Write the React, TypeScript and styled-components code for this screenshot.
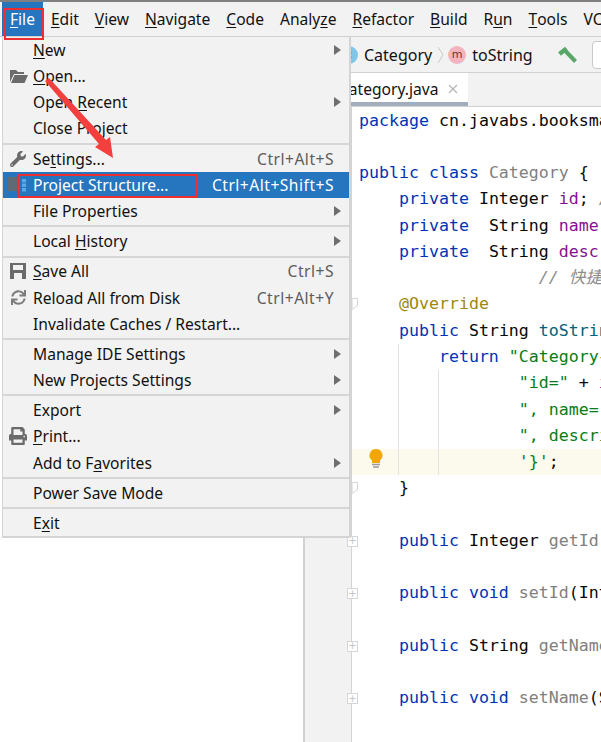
import React from "react";
import styled, { createGlobalStyle } from "styled-components";
import { FaWrench, FaPrint, FaSync } from "react-icons/fa";

const GlobalStyle = createGlobalStyle`
  html, body {
    margin: 0;
    padding: 0;
    background: #fff;
  }
  body {
    font-family: "Noto Sans", "Open Sans", sans-serif;
  }
`;

const Window = styled.div`
  position: relative;
  display: flex;
  flex-direction: column;
  width: 601px;
  height: 742px;
  overflow: hidden;
  background: #fff;
`;

const TopLine = styled.div`
  height: 2px;
  background: #7f7f7f;
  flex: none;
`;

const MenuBar = styled.div`
  display: flex;
  height: 34px;
  flex: none;
  padding-left: 2px;
  background: #f2f2f2;
  border-bottom: 1px solid #d1d1d1;
  font-size: 15.6px;
  white-space: nowrap;
`;

const BarItem = styled.div<{ $active?: boolean }>`
  display: flex;
  align-items: center;
  padding: 0 8px 1px;
  color: ${({ $active }) => ($active ? "#fff" : "#111")};
  background: ${({ $active }) => ($active ? "#2675bf" : "transparent")};
`;

const Body = styled.div`
  display: flex;
  flex: 1;
  min-height: 0;
`;

const Sidebar = styled.div`
  width: 303px;
  flex: none;
  background: #fff;
  border-right: 2px solid #d1d1d1;
`;

const Main = styled.div`
  display: flex;
  flex-direction: column;
  flex: 1;
  min-width: 0;
`;

const Breadcrumb = styled.div`
  display: flex;
  align-items: center;
  height: 35px;
  flex: none;
  padding-left: 35px;
  background: #f2f2f2;
  border-bottom: 1px solid #d1d1d1;
  font-size: 16px;
  color: #111;
  white-space: nowrap;
`;

const Badge = styled.span<{ $bg: string }>`
  display: inline-flex;
  align-items: center;
  justify-content: center;
  flex: none;
  width: 18px;
  height: 18px;
  border-radius: 50%;
  background: ${({ $bg }) => $bg};
  font-family: "DejaVu Sans", sans-serif;
  font-size: 11px;
  color: #5a3a42;
`;

const CrumbText = styled.span`
  margin-left: 6px;
`;

const Chevron = styled.svg`
  flex: none;
  margin: 0 4px 0 5px;
`;

const HammerIcon = styled.svg`
  flex: none;
  margin-left: 25px;
`;

const RunSelect = styled.div`
  flex: none;
  width: 40px;
  height: 26px;
  margin-left: 14px;
  background: #fff;
  border: 1px solid #c9c9c9;
  border-radius: 4px;
`;

const TabBar = styled.div`
  display: flex;
  height: 33px;
  flex: none;
  background: #f2f2f2;
  border-bottom: 1px solid #d1d1d1;
`;

const Tab = styled.div`
  display: flex;
  align-items: center;
  width: 163px;
  box-sizing: border-box;
  padding: 2px 0 0 34px;
  background: #fff;
  border-bottom: 4px solid #a3adbb;
  font-size: 15.6px;
  color: #111;
  white-space: nowrap;
`;

const TabClose = styled.svg`
  flex: none;
  margin-left: 10px;
`;

const EditorRow = styled.div`
  display: flex;
  flex: 1;
  min-height: 0;
`;

const Gutter = styled.div`
  width: 46px;
  flex: none;
  background: #f2f2f2;
  border-right: 1px solid #d4d4d4;
`;

const Code = styled.div`
  flex: 1;
  min-width: 0;
  padding-top: 0.6px;
`;

const CodeLine = styled.div<{ $caret?: boolean }>`
  position: relative;
  height: 26.27px;
  padding-left: 7px;
  background: ${({ $caret }) => ($caret ? "#fcfaed" : "transparent")};
  font-family: "DejaVu Sans Mono", "Noto Sans CJK SC", monospace;
  font-size: 16.6px;
  line-height: 26.27px;
  white-space: pre;
`;

const tokenColors = {
  kw: "#0033b3",
  plain: "#080808",
  type: "#080808",
  field: "#871094",
  method: "#00627a",
  unused: "#808080",
  str: "#067d17",
  anno: "#9e880d",
  comment: "#8c8c8c",
};

type TokenKind = keyof typeof tokenColors;

const Token = styled.span<{ $kind: TokenKind }>`
  color: ${({ $kind }) => tokenColors[$kind]};
  font-style: ${({ $kind }) => ($kind === "comment" ? "italic" : "normal")};
`;

const Guide = styled.i<{ $left: number }>`
  position: absolute;
  top: 0;
  bottom: 0;
  left: ${({ $left }) => $left}px;
  width: 1px;
  background: #e3e3e3;
`;

const FoldBox = styled.span`
  position: absolute;
  top: 8px;
  left: -5px;
  display: flex;
  align-items: center;
  justify-content: center;
  box-sizing: border-box;
  width: 11px;
  height: 11px;
  background: #fff;
  border: 1px solid #d6d6d6;
  color: #c4c4c4;
  font: 10px/1 "DejaVu Sans", sans-serif;
`;

const FoldEnd = styled.svg`
  position: absolute;
  top: 7px;
  left: 0;
`;

const Bulb = styled.svg`
  position: absolute;
  top: 0;
  left: 17px;
`;

/* the open File menu, it hangs over the editor */
const Menu = styled.div`
  position: absolute;
  top: 37px;
  left: 2px;
  width: 346px;
  background: #f2f2f2;
  border-left: 1px solid #d4d4d4;
  border-right: 2px solid #d4d4d4;
  border-bottom: 2px solid #d4d4d4;
  font-size: 15.6px;
  color: #111;
`;

const MenuRow = styled.div<{ $active?: boolean }>`
  display: flex;
  align-items: center;
  box-sizing: border-box;
  height: 26.2px;
  padding: 0 8px 0.5px 5px;
  color: ${({ $active }) => ($active ? "#fff" : "#111")};
  background: ${({ $active }) => ($active ? "#2675bf" : "transparent")};
  white-space: nowrap;
`;

const IconSlot = styled.span`
  display: flex;
  align-items: center;
  justify-content: center;
  flex: none;
  width: 20px;
  height: 20px;
  margin-right: 5px;
  color: #6b6b6b;
`;

const RowLabel = styled.span`
  flex: 1;
`;

const Shortcut = styled.span<{ $active?: boolean }>`
  color: ${({ $active }) => ($active ? "#fff" : "#5c5c5c")};
  letter-spacing: 0.5px;
  margin-right: 7px;
`;

const SubArrow = styled.span`
  flex: none;
  width: 0;
  height: 0;
  border-left: 7px solid #6e6e6e;
  border-top: 5px solid transparent;
  border-bottom: 5px solid transparent;
`;

const MenuSeparator = styled.div`
  height: 2px;
  margin: 1px 0;
  background: #d6d6d6;
`;

const Mnemonic = styled.span`
  text-decoration: underline;
  text-underline-offset: 2px;
`;

const RedBox = styled.div<{ $x: number; $y: number; $w: number; $h: number }>`
  position: absolute;
  left: ${({ $x }) => $x}px;
  top: ${({ $y }) => $y}px;
  width: ${({ $w }) => $w}px;
  height: ${({ $h }) => $h}px;
  box-sizing: border-box;
  border: 2px solid #ee2f2f;
`;

const ArrowMark = styled.svg`
  position: absolute;
  left: 0;
  top: 0;
`;

const label = (text: string, at?: number) =>
  at === undefined ? (
    text
  ) : (
    <>
      {text.slice(0, at)}
      <Mnemonic>{text[at]}</Mnemonic>
      {text.slice(at + 1)}
    </>
  );

const barItems: [string, number?][] = [
  ["File", 0],
  ["Edit", 0],
  ["View", 0],
  ["Navigate", 0],
  ["Code", 0],
  ["Analyze", 5],
  ["Refactor", 0],
  ["Build", 0],
  ["Run", 1],
  ["Tools", 0],
  ["VCS", 2],
];

const FolderIcon = () => (
  <svg width="19" height="14" viewBox="0 0 19 14">
    <path d="M1 13V1h6l2 2h6v2H5L1 13z" fill="#6b6b6b" />
    <path d="M5.5 6H19l-3.5 8H2z" fill="#6b6b6b" />
  </svg>
);

const StructureIcon = () => (
  <svg width="20" height="15" viewBox="0 0 20 15">
    <rect x="0" y="0" width="9" height="14" fill="#5f6a75" />
    <rect x="14" y="2" width="4" height="3.500" fill="#5aa9e6" />
    <rect x="14" y="6.500" width="4" height="3.500" fill="#5aa9e6" />
    <rect x="14" y="11" width="4" height="3.500" fill="#5aa9e6" />
  </svg>
);

const SaveIcon = () => (
  <svg width="16" height="16" viewBox="0 0 16 16">
    <path
      d="M0 0h16v16H0zM3 2v5h10V2zM4 10v6h8v-6z"
      fill="#6b6b6b"
      fillRule="evenodd"
    />
  </svg>
);

type Entry =
  | { sep: true }
  | {
      sep?: false;
      text: string;
      at?: number;
      icon?: React.ReactNode;
      keys?: string;
      sub?: boolean;
      active?: boolean;
    };

const menu: Entry[] = [
  { text: "New", at: 0, sub: true },
  { text: "Open...", at: 0, icon: <FolderIcon /> },
  { text: "Open Recent", at: 5, sub: true },
  { text: "Close Project" },
  { sep: true },
  { text: "Settings...", at: 2, icon: <FaWrench size={16} />, keys: "Ctrl+Alt+S" },
  { text: "Project Structure...", icon: <StructureIcon />, keys: "Ctrl+Alt+Shift+S", active: true },
  { text: "File Properties", sub: true },
  { sep: true },
  { text: "Local History", at: 6, sub: true },
  { sep: true },
  { text: "Save All", at: 0, icon: <SaveIcon />, keys: "Ctrl+S" },
  { text: "Reload All from Disk", icon: <FaSync size={15} color="#7d7d7d" />, keys: "Ctrl+Alt+Y" },
  { text: "Invalidate Caches / Restart..." },
  { sep: true },
  { text: "Manage IDE Settings", sub: true },
  { text: "New Projects Settings", sub: true },
  { sep: true },
  { text: "Export", sub: true },
  { text: "Print...", at: 0, icon: <FaPrint size={18} /> },
  { text: "Add to Favorites", at: 8, sub: true },
  { sep: true },
  { text: "Power Save Mode" },
  { sep: true },
  { text: "Exit", at: 1 },
];

type Line = {
  tokens?: [TokenKind, string][];
  guides?: number[];
  fold?: "box" | "end";
  caret?: boolean;
};

const code: Line[] = [
  { tokens: [["kw", "package "], ["plain", "cn.javabs.booksmanager.entity;"]] },
  {},
  { tokens: [["kw", "public class "], ["unused", "Category "], ["plain", "{"]] },
  { tokens: [["kw", "    private "], ["type", "Integer "], ["field", "id"], ["plain", "; "], ["comment", "//"]] },
  { tokens: [["kw", "    private  "], ["type", "String "], ["field", "name"], ["plain", ";"]] },
  { tokens: [["kw", "    private  "], ["type", "String "], ["field", "description"], ["plain", ";"]] },
  { tokens: [["comment", "                  // 快捷键"]] },
  { tokens: [["anno", "    @Override"]], fold: "end" },
  { tokens: [["kw", "    public "], ["type", "String "], ["method", "toString"], ["plain", "() {"]] },
  { tokens: [["kw", "        return "], ["str", '"Category{" '], ["plain", "+"]], guides: [46] },
  { tokens: [["str", '                "id=" '], ["plain", "+ "], ["field", "id"]], guides: [46, 86] },
  { tokens: [["str", "                \", name='\" "], ["plain", "+ "]], guides: [46, 86] },
  { tokens: [["str", "                \", description='\""]], guides: [46, 86] },
  { tokens: [["str", "                '}'"], ["plain", ";"]], guides: [46, 86], caret: true },
  { tokens: [["plain", "    }"]], fold: "end" },
  {},
  { tokens: [["kw", "    public "], ["type", "Integer "], ["unused", "getId"], ["plain", "() {"]], fold: "box" },
  {},
  { tokens: [["kw", "    public void "], ["unused", "setId"], ["plain", "(Integer id)"]], fold: "box" },
  {},
  { tokens: [["kw", "    public "], ["type", "String "], ["unused", "getName"], ["plain", "()"]], fold: "box" },
  {},
  { tokens: [["kw", "    public void "], ["unused", "setName"], ["plain", "(String)"]], fold: "box" },
];

const App = () => {
  return (
    <Window>
      <GlobalStyle />
      <TopLine />
      <MenuBar>
        {barItems.map(([text, at], i) => (
          <BarItem key={text} $active={i === 0}>
            {label(text, at)}
          </BarItem>
        ))}
      </MenuBar>
      <Body>
        <Sidebar />
        <Main>
          <Breadcrumb>
            <Badge $bg="#7fc6e8">c</Badge>
            <CrumbText>Category</CrumbText>
            <Chevron width="7" height="18" viewBox="0 0 7 18">
              <path d="M1 1l5 8-5 8" fill="none" stroke="#c8c8c8" />
            </Chevron>
            <Badge $bg="#f4b3bd">m</Badge>
            <CrumbText>toString</CrumbText>
            <HammerIcon width="20" height="18" viewBox="0 0 20 18">
              <path d="M1.500 8L8.500 2.500" stroke="#59a869" strokeWidth="4.500" fill="none" />
              <path d="M6 3.500L17.500 15.500" stroke="#59a869" strokeWidth="4" fill="none" />
            </HammerIcon>
            <RunSelect />
          </Breadcrumb>
          <TabBar>
            <Tab>
              Category.java
              <TabClose width="10" height="10" viewBox="0 0 10 10">
                <path d="M1 1l8 8M9 1l-8 8" stroke="#b5b5b5" strokeWidth="1.2" />
              </TabClose>
            </Tab>
          </TabBar>
          <EditorRow>
            <Gutter />
            <Code>
              {code.map((line, i) => (
                <CodeLine key={i} $caret={line.caret}>
                  {line.guides?.map((g) => <Guide key={g} $left={g} />)}
                  {line.fold === "box" && <FoldBox>+</FoldBox>}
                  {line.fold === "end" && (
                    <FoldEnd width="6" height="12" viewBox="0 0 6 12">
                      <path d="M0 .5h5.500v7L0 11.500z" fill="#fff" stroke="#d6d6d6" />
                    </FoldEnd>
                  )}
                  {line.caret && (
                    <Bulb width="14" height="20" viewBox="0 0 14 20">
                      <path d="M7 0a6.500 6.500 0 0 0-4 11.600V14h8v-2.400A6.500 6.500 0 0 0 7 0z" fill="#f2a600" />
                      <path d="M3 15.500h8M4 18h6" stroke="#9a9a9a" strokeWidth="1.5" />
                    </Bulb>
                  )}
                  {line.tokens?.map(([kind, text], j) => (
                    <Token key={j} $kind={kind}>
                      {text}
                    </Token>
                  ))}
                </CodeLine>
              ))}
            </Code>
          </EditorRow>
        </Main>
      </Body>

      <Menu>
        {menu.map((item, i) =>
          item.sep ? (
            <MenuSeparator key={i} />
          ) : (
            <MenuRow key={i} $active={item.active}>
              <IconSlot>{item.icon}</IconSlot>
              <RowLabel>{label(item.text, item.at)}</RowLabel>
              {item.keys && <Shortcut $active={item.active}>{item.keys}</Shortcut>}
              {item.sub && <SubArrow />}
            </MenuRow>
          )
        )}
      </Menu>

      <RedBox $x={4} $y={8} $w={40} $h={32} />
      <RedBox $x={18} $y={174} $w={180} $h={24} />
      <ArrowMark width="130" height="170">
        <path d="M45 81L99 144L95 147L113 158L110 137L106 140L49 78z" fill="#f3403f" />
      </ArrowMark>
    </Window>
  );
};

export default App;
